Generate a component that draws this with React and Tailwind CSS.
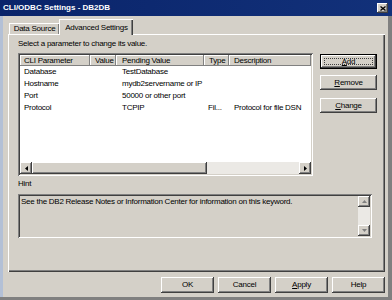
const raised = "shadow-[inset_-1px_-1px_0_#404040,inset_1px_1px_0_#ffffff,inset_-2px_-2px_0_#808080]";
const sunken = "shadow-[inset_1px_1px_0_#808080,inset_-1px_-1px_0_#ffffff,inset_2px_2px_0_#404040,inset_-2px_-2px_0_#d4d0c8]";
const headerCell = "shadow-[inset_-1px_-1px_0_#808080,inset_1px_1px_0_#ffffff]";

function Arrow({ dir, color = "#000" }) {
  if (dir === "left")
    return (
      <svg width="3" height="5" viewBox="0 0 3 5"><path d="M3 0 L0 2.5 L3 5Z" fill={color} /></svg>
    );
  if (dir === "right")
    return (
      <svg width="3" height="5" viewBox="0 0 3 5"><path d="M0 0 L3 2.5 L0 5Z" fill={color} /></svg>
    );
  if (dir === "up")
    return (
      <svg width="5" height="3" viewBox="0 0 5 3"><path d="M0 3 L2.5 0 L5 3Z" fill={color} /></svg>
    );
  return (
    <svg width="5" height="3" viewBox="0 0 5 3"><path d="M0 0 L2.5 3 L5 0Z" fill={color} /></svg>
  );
}

function SideButton({ children, isDefault }) {
  if (isDefault) {
    return (
      <div className="w-[57px] h-[15px] border border-black">
        <div className={`w-full h-full ${raised} flex items-center justify-center p-[3px]`}>
          <div className="w-full h-full border border-dotted border-[#404040] flex items-center justify-center">
            {children}
          </div>
        </div>
      </div>
    );
  }
  return (
    <div className={`w-[57px] h-[15px] ${raised} flex items-center justify-center`}>{children}</div>
  );
}

function BottomButton({ children }) {
  return (
    <div className={`w-[53px] h-[16px] ${raised} flex items-center justify-center`}>{children}</div>
  );
}

const rows = [
  ["Database", "", "TestDatabase", "", ""],
  ["Hostname", "", "mydb2servername or IP", "", ""],
  ["Port", "", "50000 or other port", "", ""],
  ["Protocol", "", "TCPIP", "Fil...", "Protocol for file DSN"],
];

export default function App() {
  return (
    <div className="w-[392px] h-[300px] bg-[#d4d0c8] flex flex-col overflow-hidden text-black text-[8px] leading-[10px] tracking-[-0.25px] font-['Liberation_Sans',Arial,sans-serif]">
      {/* Title bar */}
      <div className="h-[16px] shrink-0 flex items-center bg-gradient-to-r from-[#0a246a] to-[#12317a] pl-[3px] pr-[4px]">
        <span className="flex-1 text-white font-bold tracking-normal">CLI/ODBC Settings - DB2DB</span>
        <div className={`w-[11px] h-[10px] bg-[#d4d0c8] ${raised} flex items-center justify-center`}>
          <svg width="6" height="5" viewBox="0 0 6 5">
            <path d="M0.5 0.5 L5.5 4.5 M5.5 0.5 L0.5 4.5" stroke="#000" strokeWidth="1.3" />
          </svg>
        </div>
      </div>

      <div className="flex flex-1 min-h-0">
        <div className="w-[3px] bg-[#b3c0d6]" />
        <div className="flex-1 flex flex-col pl-[5px] pr-[3px]">
          {/* Tabs */}
          <div className="mt-[3px] h-[15px] flex items-end pl-[1px]">
            <div className="w-[50px] h-[11px] border-t border-l border-white shadow-[inset_-1px_0_0_#808080] flex items-center justify-center">
              Data Source
            </div>
            <div className="relative z-10 -mb-[1px] w-[74px] h-[16px] bg-[#d4d0c8] border-t border-l border-white shadow-[inset_-1px_0_0_#404040,inset_-2px_0_0_#808080] flex items-start justify-center pt-[3px]">
              Advanced Settings
            </div>
          </div>

          {/* Panel */}
          <div className="h-[238px] shadow-[inset_1px_1px_0_#ffffff,inset_-1px_-1px_0_#404040,inset_-2px_-2px_0_#808080] flex flex-col pl-[10px] pt-[5px]">
            <div className="h-[10px]">Select a parameter to change its value.</div>

            <div className="mt-[4px] flex gap-[7px]">
              {/* List view */}
              <div className={`w-[295px] h-[123px] ${sunken} p-[2px]`}>
                <div className="w-full h-full bg-white flex flex-col">
                  <div className="h-[11px] flex bg-[#d4d0c8] shrink-0">
                    <div className={`w-[70px] ${headerCell} pl-[4px] flex items-center`}>CLI Parameter</div>
                    <div className={`w-[26px] ${headerCell} pl-[5px] flex items-center`}>Value</div>
                    <div className={`w-[88px] ${headerCell} pl-[6px] flex items-center`}>Pending Value</div>
                    <div className={`w-[25px] ${headerCell} pl-[5px] flex items-center`}>Type</div>
                    <div className={`flex-1 ${headerCell} pl-[5px] flex items-center`}>Description</div>
                  </div>
                  {rows.map((r) => (
                    <div key={r[0]} className="h-[12px] flex items-center whitespace-nowrap">
                      <div className="w-[70px] pl-[4px] overflow-hidden">{r[0]}</div>
                      <div className="w-[26px] pl-[5px] overflow-hidden">{r[1]}</div>
                      <div className="w-[88px] pl-[6px] overflow-hidden">{r[2]}</div>
                      <div className="w-[25px] pl-[4px] overflow-hidden">{r[3]}</div>
                      <div className="flex-1 pl-[5px] overflow-hidden">{r[4]}</div>
                    </div>
                  ))}
                  <div className="flex-1" />
                  <div className="h-[12px] flex shrink-0">
                    <div className={`w-[12px] bg-[#d4d0c8] ${raised} flex items-center justify-center`}>
                      <Arrow dir="left" />
                    </div>
                    <div className={`w-[175px] bg-[#d4d0c8] ${raised}`} />
                    <div className="flex-1 bg-[#ebe9e5]" />
                    <div className={`w-[12px] bg-[#d4d0c8] ${raised} flex items-center justify-center`}>
                      <Arrow dir="right" />
                    </div>
                  </div>
                </div>
              </div>

              {/* Side buttons */}
              <div className="flex flex-col pt-[1px]">
                <SideButton isDefault>
                  <span><span className="underline">A</span>dd</span>
                </SideButton>
                <div className="mt-[6px]">
                  <SideButton>
                    <span><span className="underline">R</span>emove</span>
                  </SideButton>
                </div>
                <div className="mt-[8px]">
                  <SideButton>
                    <span><span className="underline">C</span>hange</span>
                  </SideButton>
                </div>
              </div>
            </div>

            <div className="mt-[3px] h-[10px]">Hint</div>

            <div className={`mt-[5px] w-[354px] h-[44px] ${sunken} p-[2px] flex`}>
              <div className="flex-1 pl-[1px] pt-[1px] whitespace-nowrap overflow-hidden">
                See the DB2 Release Notes or Information Center for information on this keyword.
              </div>
              <div className="w-[12px] flex flex-col">
                <div className={`h-[11px] bg-[#d4d0c8] ${raised} flex items-center justify-center`}>
                  <Arrow dir="up" color="#808080" />
                </div>
                <div className="flex-1 bg-[#ebe9e5]" />
                <div className={`h-[11px] bg-[#d4d0c8] ${raised} flex items-center justify-center`}>
                  <Arrow dir="down" color="#808080" />
                </div>
              </div>
            </div>
          </div>

          {/* Bottom buttons */}
          <div className="mt-[5px] flex justify-end gap-[4px]">
            <BottomButton>OK</BottomButton>
            <BottomButton>Cancel</BottomButton>
            <BottomButton>
              <span><span className="underline">A</span>pply</span>
            </BottomButton>
            <BottomButton>Help</BottomButton>
          </div>
        </div>
        <div className="w-[4px] bg-[#808080]" />
      </div>
      <div className="h-[3px] shrink-0 bg-[#808080]" />
    </div>
  );
}
